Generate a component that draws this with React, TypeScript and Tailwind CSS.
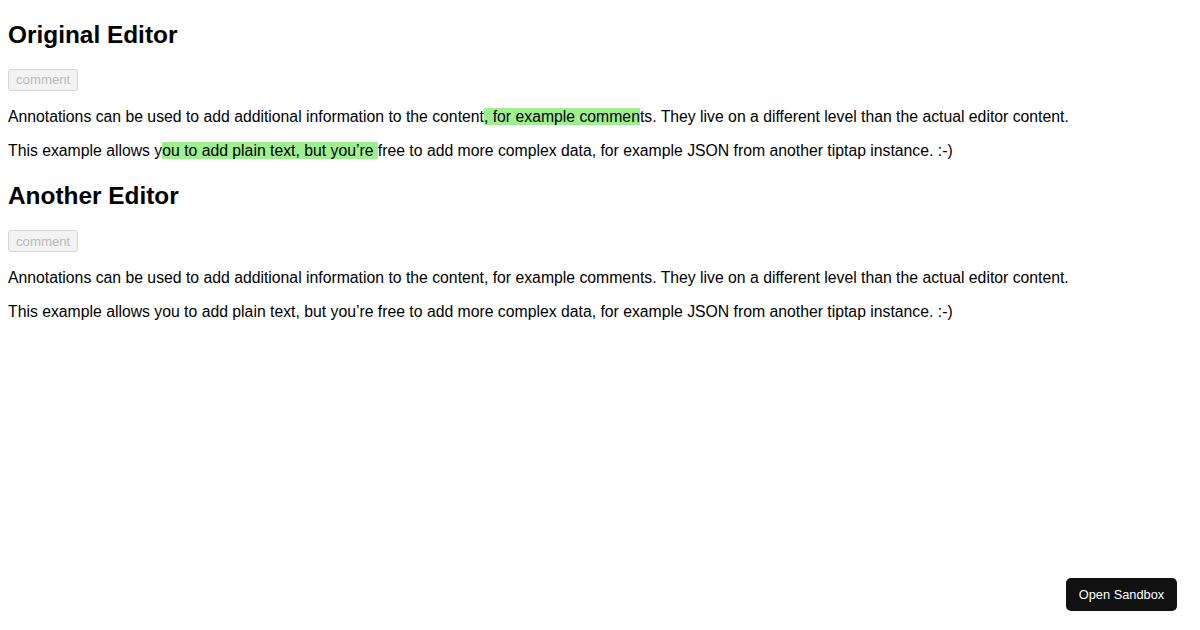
export default function App() {
  return (
    <div className="relative min-h-[630px] bg-white px-2 pt-[1px] font-['Liberation_Sans',Arial,sans-serif] text-black">
      <Editor
        title="Original Editor"
        first={
          <>
            Annotations can be used to add additional information to the content
            <span className="bg-[#9DEF8F]">, for example commen</span>
            ts. They live on a different level than the actual editor content.
          </>
        }
        second={
          <>
            This example allows y
            <span className="bg-[#9DEF8F]">ou to add plain text, but you’re </span>
            free to add more complex data, for example JSON from another tiptap instance. :-)
          </>
        }
      />
      <Editor
        title="Another Editor"
        first={
          <>
            Annotations can be used to add additional information to the content, for example
            comments. They live on a different level than the actual editor content.
          </>
        }
        second={
          <>
            This example allows you to add plain text, but you’re free to add more complex data,
            for example JSON from another tiptap instance. :-)
          </>
        }
      />

      <button className="absolute bottom-[19px] right-[23px] h-[33px] w-[111px] rounded-[5px] bg-[#111111] text-[12.8px] text-white">
        Open Sandbox
      </button>
    </div>
  );
}

function Editor({
  title,
  first,
  second,
}: {
  title: string;
  first: React.ReactNode;
  second: React.ReactNode;
}) {
  return (
    <div className="mb-[22px]">
      <h2 className="mt-[20px] mb-[19px] text-[24.4px] font-bold leading-[27.6px]">{title}</h2>
      <div className="flex h-[24px] items-center">
        <button
          disabled
          className="h-[22px] rounded-[3px] border border-[#d6d6d6] bg-[#f3f3f3] px-[7px] text-[13.2px] leading-[15px] text-[#b9b9b9]"
        >
          comment
        </button>
      </div>
      <p className="mt-4 text-[15.78px] leading-[18.4px]">{first}</p>
      <p className="mt-4 text-[15.78px] leading-[18.4px]">{second}</p>
    </div>
  );
}
